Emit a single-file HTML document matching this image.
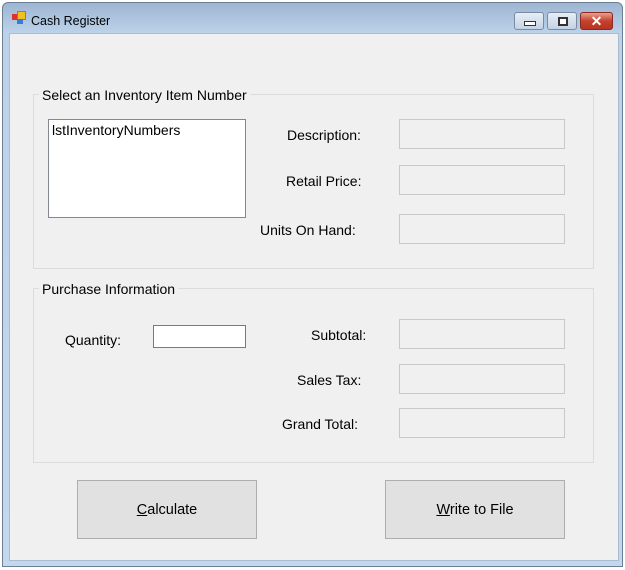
<!DOCTYPE html>
<html><head><style>
body{margin:0;width:625px;height:570px;background:#fff;position:relative;overflow:hidden;font-family:"Liberation Sans",sans-serif;font-size:14px;color:#000}
.a{position:absolute}
.win{left:2px;top:2px;width:619px;height:563px;border:1px solid #6d7f95;border-radius:6px 6px 0 0;background:linear-gradient(#9db6d2,#bcd2ea 30px,#c3d8ee);}
.client{left:9px;top:33px;width:608px;height:526px;background:#f0f0f0;border:1px solid #a9bcd2}
.grp{border:1px solid #dcdcdc;}
.lg{background:#f0f0f0;padding:0 3px}
.tb{width:166px;height:30px;border:1px solid #c8c8c8;background:#f0f0f0;box-sizing:border-box}
.btn{width:180px;height:59px;border:1px solid #adadad;background:#e1e1e1;box-sizing:border-box;display:flex;align-items:center;justify-content:center;font-size:14.5px}
.cb{top:12px;height:18px;border:1px solid #7a8aa0;border-radius:3px;background:linear-gradient(#e6eef7,#c4d3e5);box-sizing:border-box}
</style></head><body>
<div class="a win"></div>
<div class="a" style="left:12px;top:14px;width:8px;height:6px;background:#d33"></div>
<div class="a" style="left:17px;top:11px;width:7px;height:7px;background:#f0c020;border:1px solid #b08000"></div>
<div class="a" style="left:17px;top:19px;width:6px;height:5px;background:#3a7ad8"></div>
<div class="a" style="left:31px;top:14px;font-size:12.5px">Cash Register</div>
<div class="a cb" style="left:514px;width:30px"><div class="a" style="left:9px;top:8px;width:10px;height:3px;border:1px solid #333;background:#fff"></div></div>
<div class="a cb" style="left:547px;width:30px"><div class="a" style="left:10px;top:4px;width:6px;height:5px;border:2px solid #333;background:#fff"></div></div>
<div class="a cb" style="left:580px;width:33px;border-color:#8a2a20;background:linear-gradient(#e9a08f,#c4422e 50%,#b8321f);color:#fff;font-weight:bold;font-size:14px;text-align:center;line-height:16px">✕</div>
<div class="a client"></div>
<div class="a grp" style="left:33px;top:94px;width:559px;height:173px"></div>
<div class="a lg" style="left:39px;top:87px">Select an Inventory Item Number</div>
<div class="a" style="left:48px;top:119px;width:198px;height:99px;border:1px solid #828790;background:#fff;box-sizing:border-box;padding:2px 3px">lstInventoryNumbers</div>
<div class="a" style="left:287px;top:127px">Description:</div>
<div class="a" style="left:286px;top:173px">Retail Price:</div>
<div class="a" style="left:260px;top:222px">Units On Hand:</div>
<div class="a tb" style="left:399px;top:119px"></div>
<div class="a tb" style="left:399px;top:165px"></div>
<div class="a tb" style="left:399px;top:214px"></div>
<div class="a grp" style="left:33px;top:288px;width:559px;height:173px"></div>
<div class="a lg" style="left:39px;top:281px">Purchase Information</div>
<div class="a" style="left:65px;top:332px">Quantity:</div>
<div class="a" style="left:153px;top:325px;width:93px;height:23px;border:1px solid #7a7a7a;background:#fff;box-sizing:border-box"></div>
<div class="a" style="left:311px;top:327px">Subtotal:</div>
<div class="a" style="left:297px;top:372px">Sales Tax:</div>
<div class="a" style="left:282px;top:416px">Grand Total:</div>
<div class="a tb" style="left:399px;top:319px"></div>
<div class="a tb" style="left:399px;top:364px"></div>
<div class="a tb" style="left:399px;top:408px"></div>
<div class="a btn" style="left:77px;top:480px"><span><u>C</u>alculate</span></div>
<div class="a btn" style="left:385px;top:480px"><span><u>W</u>rite to File</span></div>
</body></html>
